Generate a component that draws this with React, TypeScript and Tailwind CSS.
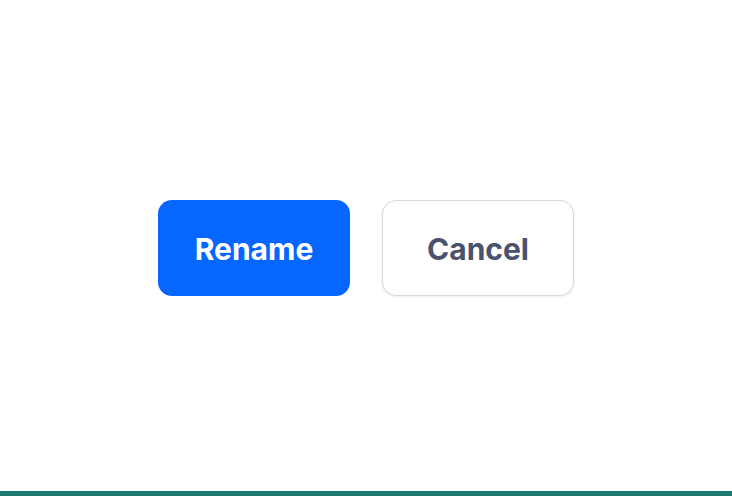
export default function App() {
  return (
    <div className="flex h-[496px] w-full flex-col bg-white" style={{ fontFamily: "Inter, 'Liberation Sans', sans-serif" }}>
      <div className="flex flex-1 items-center justify-center gap-8 pt-[5px]">
        <button
          type="button"
          className="flex h-24 w-48 items-center justify-center rounded-[14px] bg-[#0567ff] pt-[2px] text-[30px] font-bold text-white"
        >
          Rename
        </button>
        <button
          type="button"
          className="flex h-24 w-48 items-center justify-center rounded-[14px] border border-[#d6d7df] bg-white pt-[2px] text-[30px] font-bold text-[#4b526d] shadow-[0_1px_3px_rgba(16,24,40,0.08)]"
        >
          Cancel
        </button>
      </div>
      <div className="h-[5px] w-full bg-[#1a7b73]" />
    </div>
  );
}
